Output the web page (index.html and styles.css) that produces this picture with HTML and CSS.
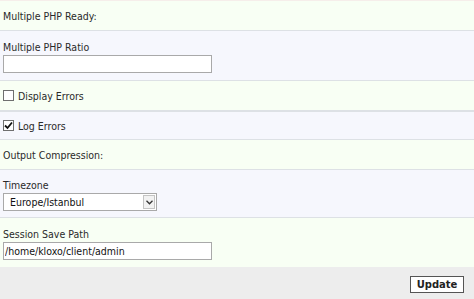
FILE: index.html
```html
<!DOCTYPE html>
<html>
<head>
    <meta charset="UTF-8">
    <title>PHP Config</title>
    <link rel="stylesheet" href="styles.css">
</head>
<body>

    <form class="config">
        <div class="row odd r1">
            <span class="label">Multiple PHP Ready:</span>
        </div>
        <div class="row even r2">
            <div class="label">Multiple PHP Ratio</div>
            <input type="text" class="field" value="">
        </div>
        <div class="row odd r3">
            <label class="check">
                <span class="box"></span>
                Display Errors
            </label>
        </div>
        <div class="row even r4">
            <label class="check">
                <span class="box">
                    <svg width="9" height="9" viewBox="0 0 9 9"><path d="M1 4.5 L3.5 7 L8 1.5" fill="none" stroke="#111" stroke-width="1.8"/></svg>
                </span>
                Log Errors
            </label>
        </div>
        <div class="row odd r5">
            <span class="label">Output Compression:</span>
        </div>
        <div class="row even r6">
            <div class="label">Timezone</div>
            <div class="select-wrap">
                <select class="select">
                    <option>Europe/Istanbul</option>
                </select>
                <span class="arrow">
                    <svg width="7" height="5" viewBox="0 0 7 5"><path d="M0.5 0.8 L3.5 3.8 L6.5 0.8" fill="none" stroke="#333" stroke-width="1.3"/></svg>
                </span>
            </div>
        </div>
        <div class="row odd r7">
            <div class="label">Session Save Path</div>
            <input type="text" class="field path" value="/home/kloxo/client/admin">
        </div>
        <div class="footer">
            <button type="button" class="btn">Update</button>
        </div>
    </form>

</body>
</html>
```

FILE: styles.css
```css
body {
    margin: 0;
    padding: 0;
    font-family: "DejaVu Sans Condensed", "DejaVu Sans", sans-serif;
    font-size: 10.5px;
    color: #2a2a2a;
    background: #ffffff;
}

.config {
    width: 474px;
}

.row {
    box-sizing: border-box;
    padding: 0 3px;
    border-bottom: 1px solid #dde1e5;
}

.odd {
    background-color: #f8fff4;
}

.even {
    background-color: #f6f7fd;
}

.r1 {
    height: 31px;
    display: flex;
    align-items: center;
    border-top: 1px solid #f6eeea;
}

.r2 {
    height: 50px;
    padding-top: 10px;
}

.r3 {
    height: 31px;
    display: flex;
    align-items: center;
    border-bottom-width: 2px;
}

.r4 {
    height: 28px;
    display: flex;
    align-items: center;
}

.r5 {
    height: 30px;
    display: flex;
    align-items: center;
}

.r6 {
    height: 48px;
    padding-top: 9px;
}

.r7 {
    height: 49px;
    padding-top: 10px;
    border-bottom: none;
}

.label {
    line-height: 12px;
}

.field {
    display: block;
    box-sizing: border-box;
    width: 209px;
    height: 18px;
    margin-top: 2px;
    padding: 0 1px;
    border: 1px solid #a9a9a9;
    background: #ffffff;
    font-family: inherit;
    font-size: 10.5px;
    color: #111;
    outline: none;
}

.check {
    display: flex;
    align-items: center;
    gap: 4px;
}

.box {
    box-sizing: border-box;
    width: 11px;
    height: 11px;
    border: 1px solid #6f6f6f;
    background: #ffffff;
    display: flex;
    align-items: center;
    justify-content: center;
}

.select-wrap {
    position: relative;
    width: 154px;
    height: 18px;
    margin-top: 2px;
}

.select {
    appearance: none;
    box-sizing: border-box;
    width: 154px;
    height: 18px;
    padding: 0 0 0 6px;
    border: 1px solid #a9a9a9;
    border-radius: 0;
    background: #ffffff;
    font-family: inherit;
    font-size: 10.5px;
    color: #111;
    outline: none;
}

.arrow {
    position: absolute;
    top: 2px;
    right: 2px;
    box-sizing: border-box;
    width: 12px;
    height: 14px;
    border: 1px solid #c4c4c4;
    background: #f2f2f2;
    display: flex;
    align-items: center;
    justify-content: center;
}

.footer {
    height: 33px;
    background-color: #ededed;
    display: flex;
    justify-content: flex-end;
    align-items: center;
    padding-right: 10px;
}

.btn {
    box-sizing: border-box;
    width: 54px;
    height: 17px;
    padding: 0;
    margin-top: 2px;
    border: 1px solid #555;
    background: #ffffff;
    font-family: "DejaVu Sans", sans-serif;
    font-size: 10px;
    font-weight: bold;
    color: #222;
}
```
